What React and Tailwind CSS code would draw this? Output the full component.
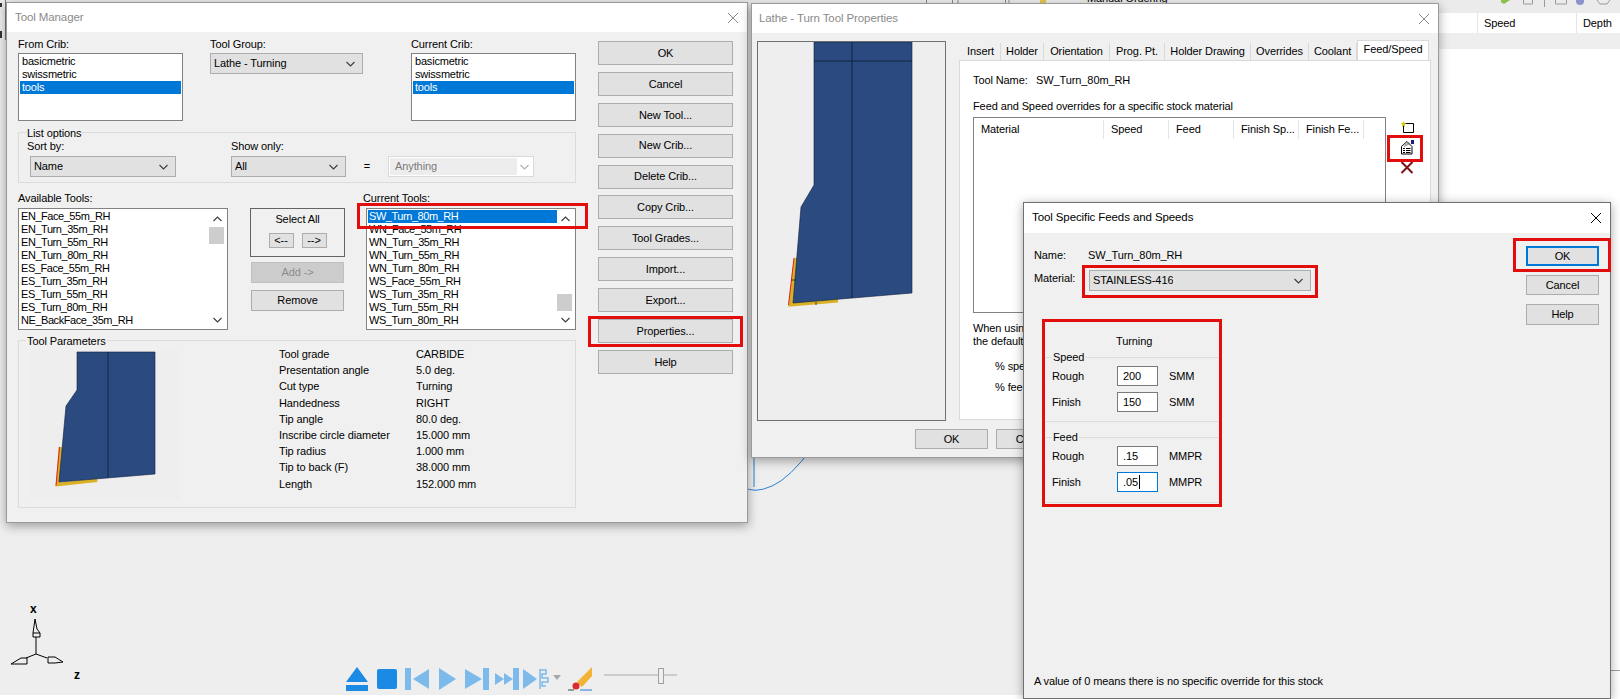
import React from 'react';

// Shared bits for the classic Windows dialog look
const btn = 'flex items-center justify-center bg-[#e1e1e1] border border-[#adadad] text-black';
const groupBox = 'relative border border-[#dcdcdc]';
const groupLabel = 'absolute -top-[8px] left-[7px] bg-[#f0f0f0] px-px leading-[16px]';

const Chevron = ({ up, color = '#3c3c3c' }) => (
  <svg width="9" height="6" viewBox="0 0 9 6" className="shrink-0">
    <path d={up ? 'M.5 5 4.5 1l4 4' : 'M.5 1l4 4 4-4'} fill="none" stroke={color} strokeWidth="1.1" />
  </svg>
);

const CloseX = ({ color }) => (
  <svg width="14" height="14" viewBox="0 0 14 14">
    <path d="M2 2l10 10M12 2 2 12" fill="none" stroke={color} strokeWidth="1" />
  </svg>
);

const Select = ({ value, className }) => (
  <div className={`flex h-[21px] items-center justify-between border border-[#adadad] bg-[#e1e1e1] pl-[3px] pr-[7px] ${className}`}>
    <span className="truncate">{value}</span>
    <Chevron />
  </div>
);

const CribList = ({ className }) => (
  <div className={`h-[68px] border border-[#828282] bg-white p-px leading-[13px] tracking-[-0.2px] ${className}`}>
    <div className="h-[13px] pl-[2px]">basicmetric</div>
    <div className="h-[13px] pl-[2px]">swissmetric</div>
    <div className="h-[13px] bg-[#0078d7] pl-[2px] text-white">tools</div>
  </div>
);

const ToolList = ({ items, selected, thumb, className }) => (
  <div className={`flex h-[122px] w-[210px] border border-[#828282] bg-white p-px leading-[13px] tracking-[-0.45px] ${className}`}>
    <div className="w-[189px] overflow-hidden">
      {items.map((t) => (
        <div key={t} className={`h-[13px] pl-px ${t === selected ? 'bg-[#0078d7] text-white' : ''}`}>{t}</div>
      ))}
    </div>
    <div className="flex w-[17px] flex-col">
      <div className="flex h-[17px] items-center justify-center"><Chevron up /></div>
      <div className={`h-[17px] w-[15px] bg-[#cdcdcd] ${thumb}`} />
      <div className="mt-auto flex h-[17px] items-center justify-center"><Chevron /></div>
    </div>
  </div>
);

const ToolDrawing = () => (
  <svg width="150" height="150" viewBox="30 350 150 150" className="mt-[9px] ml-[11px] shrink-0 bg-[#eeeeee]">
    <path d="M60.500 447 57.500 484.500l38-4-.3-3" fill="none" stroke="#d9b026" strokeWidth="3.500" />
    <path d="M59.500 447 56 485.500" fill="none" stroke="#e02020" strokeWidth="1" />
    <path d="M77 352h78v122l-96 8 7-76 11-16z" fill="#2a4a80" stroke="#0e1f3d" strokeWidth=".6" />
    <path d="M108 352v126" stroke="#0e1f3d" strokeWidth=".8" />
  </svg>
);

const LargeToolDrawing = () => (
  <svg viewBox="757 41 187 378" className="h-[378px] w-[187px]">
    <path d="M795 257 789.500 303.500l47.500-4" fill="none" stroke="#d9b026" strokeWidth="4" />
    <path d="M793 257 787.500 304" fill="none" stroke="#e02020" strokeWidth="1" />
    <path d="M813 41h98v251l-119 10 8-96 13-22z" fill="#2a4a80" stroke="#0e1f3d" strokeWidth=".6" />
    <path d="M851 41v256M813 60h98" stroke="#0e1f3d" strokeWidth=".9" fill="none" />
    <path d="M790 279h5M815 301v3" stroke="#222" strokeWidth=".8" />
  </svg>
);

const TriadIcon = () => (
  <svg width="90" height="95" viewBox="0 600 90 95" className="shrink-0">
    <path d="M36 654v-17" stroke="#000" strokeWidth="1" />
    <path d="M35 619l-2 14v4h7v-4l-3-4z" fill="#eee" stroke="#000" strokeWidth="1" />
    <path d="M33 633h7" stroke="#000" strokeWidth="1" />
    <path d="M36 654l-10 4M36 654l11 4" stroke="#000" strokeWidth="1" />
    <path d="M11 664l10-6h6v6h-6z" fill="#eee" stroke="#000" strokeWidth="1" />
    <path d="M63 662l-8-5h-7v6h7z" fill="#eee" stroke="#000" strokeWidth="1" />
    <text x="30" y="613" fontSize="12" fontWeight="700" fontFamily="Liberation Sans, sans-serif">x</text>
    <text x="74" y="679" fontSize="12" fontWeight="700" fontFamily="Liberation Sans, sans-serif">z</text>
  </svg>
);

const PlaybackIcons = () => (
  <svg width="340" height="35" viewBox="340 660 340 35" className="ml-[250px] shrink-0">
    <path d="M357 667l11 15h-22z" fill="#1a8ae5" />
    <path d="M346 685h22v6h-22z" fill="#1a8ae5" />
    <rect x="377" y="669" width="20" height="20" rx="2" fill="#1a8ae5" />
    <g fill="#7dbaec">
      <path d="M405 668h6v22h-6zM429 669v20l-16-10z" />
      <path d="M439 668l17 11-17 11z" />
      <path d="M465 669l17 10-17 10zM483 668h6v22h-6z" />
      <path d="M495 673l9 6-9 6zM504 673l9 6-9 6zM513 668h6v22h-6z" />
      <path d="M523 669l14 10-14 10z" />
    </g>
    <path d="M540 669v20M540 670h6v4h-4v4h6v4h-6v4h4" fill="none" stroke="#7dbaec" strokeWidth="1.500" />
    <path d="M553 675h8l-4 5z" fill="#a8a8a8" />
    <path d="M592 667l-15 15 5 5 10-11z" fill="#f2b233" />
    <circle cx="576" cy="686" r="3.500" fill="#dc2b30" />
    <path d="M568 690h6" stroke="#444" strokeWidth="1" />
    <path d="M580 690h12" stroke="#2a7fd4" strokeWidth="1" />
    <path d="M604 675h73" stroke="#ababab" strokeWidth="1" />
    <rect x="658.500" y="668.500" width="5" height="15" fill="#eee" stroke="#a0a0a0" />
  </svg>
);

const ToolManager = () => {
  const available = ['EN_Face_55m_RH', 'EN_Turn_35m_RH', 'EN_Turn_55m_RH', 'EN_Turn_80m_RH', 'ES_Face_55m_RH', 'ES_Turn_35m_RH', 'ES_Turn_55m_RH', 'ES_Turn_80m_RH', 'NE_BackFace_35m_RH'];
  const current = ['SW_Turn_80m_RH', 'WN_Face_55m_RH', 'WN_Turn_35m_RH', 'WN_Turn_55m_RH', 'WN_Turn_80m_RH', 'WS_Face_55m_RH', 'WS_Turn_35m_RH', 'WS_Turn_55m_RH', 'WS_Turn_80m_RH'];
  const buttons = ['OK', 'Cancel', 'New Tool...', 'New Crib...', 'Delete Crib...', 'Copy Crib...', 'Tool Grades...', 'Import...', 'Export...', 'Properties...', 'Help'];
  const params = [
    ['Tool grade', 'CARBIDE'],
    ['Presentation angle', '5.0 deg.'],
    ['Cut type', 'Turning'],
    ['Handedness', 'RIGHT'],
    ['Tip angle', '80.0 deg.'],
    ['Inscribe circle diameter', '15.000 mm'],
    ['Tip radius', '1.000 mm'],
    ['Tip to back (F)', '38.000 mm'],
    ['Length', '152.000 mm'],
  ];

  return (
    <div className="absolute top-[2px] left-[6px] flex h-[521px] w-[742px] flex-col border border-[#9a9a9a] bg-[#f0f0f0] shadow-[0_3px_10px_rgba(0,0,0,0.35)]">
      <div className="flex h-[29px] shrink-0 items-center justify-between bg-white pl-[8px] pr-[7px] text-[11.500px] text-[#8a8a8a]">
        <span>Tool Manager</span>
        <CloseX color="#8a8a8a" />
      </div>
      <div className="flex">
        <div className="ml-[11px] w-[558px] pt-[4px]">
          <div className="flex">
            <div className="w-[165px]">
              <div className="h-[16px] leading-[16px]">From Crib:</div>
              <CribList className="mt-px w-[165px]" />
            </div>
            <div className="ml-[27px] w-[153px]">
              <div className="h-[16px] leading-[16px]">Tool Group:</div>
              <Select value="Lathe - Turning" className="mt-px w-[153px]" />
            </div>
            <div className="ml-[48px] w-[165px]">
              <div className="h-[16px] leading-[16px]">Current Crib:</div>
              <CribList className="mt-px w-[165px]" />
            </div>
          </div>

          <div className={`${groupBox} mt-[11px] flex h-[51px] items-end pb-[5px]`}>
            <span className={groupLabel}>List options</span>
            <div className="w-[212px]">
              <div className="h-[16px] pl-[8px] leading-[16px]">Sort by:</div>
              <Select value="Name" className="mt-[2px] ml-[11px] w-[146px]" />
            </div>
            <div className="w-[115px]">
              <div className="h-[16px] leading-[16px]">Show only:</div>
              <Select value="All" className="mt-[2px] w-[115px]" />
            </div>
            <div className="flex h-[21px] w-[42px] items-center justify-center">=</div>
            <div className="flex h-[21px] w-[146px] items-center border border-[#d9d9d9] bg-white p-px">
              <div className="flex h-full w-[127px] items-center bg-[#ededed] pl-[5px] text-[#7a7a7a]">Anything</div>
              <div className="flex flex-1 justify-center"><Chevron color="#b0b0b0" /></div>
            </div>
          </div>

          <div className="mt-[7px] flex">
            <div className="w-[210px]">
              <div className="h-[16px] leading-[16px]">Available Tools:</div>
              <ToolList items={available} thumb="" className="mt-[2px]" />
            </div>
            <div className="ml-[22px] w-[95px] pt-[18px]">
              <div className="flex h-[49px] flex-col items-center border border-[#646464] pt-[2px]">
                <div className="leading-[16px]">Select All</div>
                <div className="mt-[6px] flex gap-[8px]">
                  <div className={`${btn} h-[15px] w-[25px] leading-none`}>{'<--'}</div>
                  <div className={`${btn} h-[15px] w-[25px] leading-none`}>{'-->'}</div>
                </div>
              </div>
              <div className="ml-px mt-[5px] flex h-[21px] w-[93px] items-center justify-center border border-[#bfbfbf] bg-[#cccccc] text-[#8c8c8c]">{'Add ->'}</div>
              <div className={`${btn} ml-px mt-[7px] h-[21px] w-[93px]`}>Remove</div>
            </div>
            <div className="ml-[18px] w-[213px]">
              <div className="h-[16px] leading-[16px]">Current Tools:</div>
              <ToolList items={current} selected="SW_Turn_80m_RH" thumb="mt-[67px]" className="ml-[3px] mt-[2px]" />
            </div>
          </div>

          <div className={`${groupBox} mt-[10px] flex h-[168px] items-start`}>
            <span className={groupLabel}>Tool Parameters</span>
            <ToolDrawing />
            <div className="ml-[99px] mt-[5px] grid grid-cols-[137px_auto] auto-rows-[16.200px] items-center leading-[16px]">
              {params.map(([k, v]) => (
                <React.Fragment key={k}>
                  <span>{k}</span>
                  <span>{v}</span>
                </React.Fragment>
              ))}
            </div>
          </div>
        </div>

        <div className="ml-[22px] flex w-[135px] flex-col gap-[6.900px] pt-[9px]">
          {buttons.map((b) => (
            <div key={b} className={`${btn} h-[24px]`}>{b}</div>
          ))}
        </div>
      </div>
    </div>
  );
};

const TurnProperties = () => {
  const tabs = [
    ['Insert', 'w-[40px]'],
    ['Holder', 'w-[43px]'],
    ['Orientation', 'w-[66px]'],
    ['Prog. Pt.', 'w-[55px]'],
    ['Holder Drawing', 'w-[86px]'],
    ['Overrides', 'w-[58px]'],
    ['Coolant', 'w-[48px]'],
  ];
  const cols = [
    ['Material', 'w-[130px]'],
    ['Speed', 'w-[65px]'],
    ['Feed', 'w-[65px]'],
    ['Finish Sp...', 'w-[65px]'],
    ['Finish Fe...', 'w-[65px]'],
  ];

  return (
    <div className="absolute top-[3px] left-[751px] flex h-[455px] w-[688px] flex-col border border-[#9a9a9a] bg-[#f0f0f0] shadow-[0_3px_10px_rgba(0,0,0,0.35)]">
      <div className="flex h-[29px] shrink-0 items-center justify-between bg-white pl-[7px] pr-[7px] text-[11.500px] text-[#8a8a8a]">
        <span>Lathe - Turn Tool Properties</span>
        <CloseX color="#8a8a8a" />
      </div>
      <div className="flex items-start">
        <div className="ml-[5px] mt-[8px] h-[380px] w-[189px] shrink-0 border border-[#707070] bg-[#eeeeee]">
          <LargeToolDrawing />
        </div>
        <div className="ml-[13px] mt-[7px] w-[472px]">
          <div className="flex h-[20px] items-end pl-[2px]">
            {tabs.map(([t, w]) => (
              <div key={t} className={`flex h-[17px] items-center justify-center border-r border-[#d9d9d9] bg-[#f0f0f0] leading-none ${w}`}>{t}</div>
            ))}
            <div className="flex h-[20px] w-[72px] items-start justify-center border-x border-t border-[#d9d9d9] bg-white pt-[3px] leading-none">Feed/Speed</div>
          </div>
          <div className="h-[360px] border border-[#d9d9d9] bg-white pl-[13px] pt-[11px]">
            <div className="flex h-[16px] items-center leading-[16px]">
              <span className="w-[63px]">Tool Name:</span>
              <span>SW_Turn_80m_RH</span>
            </div>
            <div className="mt-[10px] h-[16px] leading-[16px]">Feed and Speed overrides for a specific stock material</div>
            <div className="mt-[3px] flex items-start">
              <div className="h-[196px] w-[413px] shrink-0 border border-[#828282] pt-[2px]">
                <div className="flex h-[19px]">
                  {cols.map(([c, w]) => (
                    <div key={c} className={`flex items-center border-r border-[#e5e5e5] pl-[7px] ${w}`}>{c}</div>
                  ))}
                </div>
              </div>
              <div className="ml-[13px] flex w-[16px] flex-col items-center pt-[4px]">
                <svg width="15" height="13" viewBox="0 0 15 13">
                  <path d="M3.500 2.500h10v9h-10z" fill="#fff" stroke="#000" />
                  <path d="M3.500 0l.9 1.900 2.100.6-1.800 1.100.4 2.400-1.600-1.300-1.600 1.300.4-2.400L.5 2.500l2.100-.6z" fill="#d9c400" />
                </svg>
                <svg width="15" height="15" viewBox="0 0 15 15" className="mt-[6px]">
                  <path d="M1.500 6.500 7 1.500l5 5v7.500h-10.500z" fill="#fff" stroke="#000" />
                  <path d="M5 5l3-2M4 6.500l6-3" stroke="#555" strokeWidth=".7" />
                  <path d="M3 8.500h2M6 8.500h4.500M3 10.500h2M6 10.500h4.500M3 12.500h2M6 12.500h4.500" stroke="#000" strokeWidth="1" />
                  <path d="M11 0h3v4h-3z" fill="#1a1a80" />
                </svg>
                <svg width="14" height="13" viewBox="0 0 14 13" className="mt-[6px]">
                  <path d="M1.500 1l11 11M12.500 1l-11 11" stroke="#7a1216" strokeWidth="2" />
                </svg>
              </div>
            </div>
            <div className="mt-[9px] leading-[13px]">When using this tool<br />the default</div>
            <div className="ml-[22px] mt-[10px] h-[16px] leading-[16px]">% speed</div>
            <div className="ml-[22px] mt-[5px] h-[16px] leading-[16px]">% feed</div>
          </div>
        </div>
      </div>
      <div className="ml-[163px] mt-[8px] flex gap-[8px]">
        <div className={`${btn} h-[20px] w-[73px]`}>OK</div>
        <div className={`${btn} h-[20px] w-[73px]`}>Cancel</div>
      </div>
    </div>
  );
};

const FeedInput = ({ label, value, unit, active, className }) => (
  <div className={`flex h-[20px] items-center pl-[6px] ${className}`}>
    <span className="w-[65px]">{label}</span>
    <div className={`flex h-[20px] w-[41px] items-center bg-white pl-[5px] ${active ? 'border border-[#0078d7]' : 'border border-[#7a7a7a]'}`}>
      {value}
      {active && <span className="ml-px h-[14px] w-px bg-black" />}
    </div>
    <span className="ml-[11px]">{unit}</span>
  </div>
);

const SectionLabel = ({ text }) => (
  <div className="flex h-[16px] items-center">
    <span className="h-px w-[6px] bg-[#dcdcdc]" />
    <span className="px-px">{text}</span>
    <span className="h-px flex-1 bg-[#dcdcdc]" />
  </div>
);

const FeedsDialog = () => (
  <div className="absolute top-[202px] left-[1023px] flex h-[497px] w-[588px] flex-col border border-[#707070] bg-[#f0f0f0] shadow-[0_2px_10px_rgba(0,0,0,0.35)]">
    <div className="flex h-[30px] shrink-0 items-center justify-between bg-white pl-[8px] pr-[7px] text-[11.500px] text-black">
      <span>Tool Specific Feeds and Speeds</span>
      <CloseX color="#000" />
    </div>
    <div className="flex flex-1">
      <div className="flex flex-1 flex-col pb-[9px] pl-[10px]">
        <div className="mt-[14px] flex h-[16px] items-center">
          <span className="w-[54px]">Name:</span>
          <span>SW_Turn_80m_RH</span>
        </div>
        <div className="mt-[7px] flex items-start">
          <span className="w-[55px] leading-[16px]">Material:</span>
          <Select value="STAINLESS-416" className="w-[222px]" />
        </div>
        <div className="ml-[12px] w-[172px]">
          <div className="ml-[70px] mt-[42px] h-[16px] leading-[16px]">Turning</div>
          <SectionLabel text="Speed" />
          <FeedInput label="Rough" value="200" unit="SMM" className="mt-px" />
          <FeedInput label="Finish" value="150" unit="SMM" className="mt-[6px]" />
          <div className="mt-[9px] h-px bg-[#dcdcdc]" />
          <div className="mt-[7px]"><SectionLabel text="Feed" /></div>
          <FeedInput label="Rough" value=".15" unit="MMPR" className="mt-px" />
          <FeedInput label="Finish" value=".05" unit="MMPR" active className="mt-[6px]" />
          <div className="mt-[10px] h-px bg-[#dcdcdc]" />
        </div>
        <div className="mt-auto leading-[16px]">A value of 0 means there is no specific override for this stock</div>
      </div>
      <div className="mr-[11px] flex w-[73px] flex-col pt-[13px]">
        <div className="flex h-[20px] items-center justify-center border-2 border-[#0078d7] bg-[#e1e1e1]">OK</div>
        <div className={`${btn} mt-[9px] h-[20px]`}>Cancel</div>
        <div className={`${btn} mt-[9px] h-[21px]`}>Help</div>
      </div>
    </div>
  </div>
);

// Red call-outs drawn on top of the screenshot
const callouts = [
  'top-[203px] left-[357px] h-[26px] w-[231px]',
  'top-[316px] left-[588px] h-[31px] w-[155px]',
  'top-[135px] left-[1387px] h-[27px] w-[36px]',
  'top-[238px] left-[1513px] h-[34px] w-[98px]',
  'top-[265px] left-[1082px] h-[33px] w-[236px]',
  'top-[319px] left-[1042px] h-[188px] w-[180px]',
];

export default function App() {
  return (
    <div className="relative flex h-[699px] w-[1620px] flex-col overflow-hidden bg-white font-['Liberation_Sans',Arial,sans-serif] text-[11px] tracking-[-0.1px] text-black">
      {/* app toolbar that peeks out above the dialogs */}
      <div className="flex h-[13px] shrink-0 items-start overflow-hidden bg-[#ebebeb]">
        <svg width="167" height="13" viewBox="920 0 167 13" className="ml-[920px] shrink-0">
          <path d="M926.500 0v3M952.500 0v3M958 0v3M1005.500 0v3M1009 0v3" stroke="#8a8a8a" />
          <path d="M1040 0h6v3h-6z" fill="#e6c34a" />
        </svg>
        <span className="-mt-[10px] w-[414px] shrink-0 leading-[16px]">Manual Ordering</span>
        <svg width="118" height="13" viewBox="1501 0 118 13" className="shrink-0">
          <path d="M1497 0h13l-6 4z" fill="#8cc04a" />
          <path d="M1523.500 0v4h9v-4M1544.500 0v7M1555.500 0v4h11v-4" fill="none" stroke="#9a9a9a" />
          <circle cx="1580" cy="1" r="4" fill="#8b93c9" />
          <path d="M1597 0l3 4h7l3-4" fill="none" stroke="#9a9a9a" />
        </svg>
      </div>

      <div className="flex flex-1">
        <div className="flex w-[1300px] shrink-0 items-end bg-[#eeeeee]">
          <TriadIcon />
          <PlaybackIcons />
        </div>
        <div className="flex flex-1 flex-col">
          <div className="flex h-[20px] shrink-0 bg-white">
            <div className="w-[178px] border-r border-[#e5e5e5]" />
            <div className="flex w-[99px] items-center border-r border-[#e5e5e5] pl-[6px]">Speed</div>
            <div className="flex items-center pl-[6px]">Depth</div>
          </div>
          <div className="h-[16px] shrink-0 bg-[#eeeeee]" />
          <div className="flex-1 border-b border-[#a0a0a0]" />
          <div className="h-[24px] shrink-0" />
        </div>
      </div>
      <div className="h-[4px] shrink-0 bg-white" />

      {/* sketch geometry showing under the dialogs */}
      <svg width="90" height="70" viewBox="740 445 90 70" className="absolute top-[445px] left-[740px]">
        <path d="M754 445v42M812 448q-22 30-40 38t-28 1" fill="none" stroke="#2a7fd4" strokeWidth="1" />
      </svg>
      <svg width="6" height="40" viewBox="0 0 6 40" className="absolute top-0 left-0">
        <path d="M5.500 0v40" stroke="#777" />
        <path d="M0 3h2v4H0zM0 31h2v7H0z" fill="#333" />
      </svg>

      <ToolManager />
      <TurnProperties />
      <FeedsDialog />

      {callouts.map((c) => (
        <div key={c} className={`absolute border-[3px] border-[#e20d0d] ${c}`} />
      ))}
    </div>
  );
}
